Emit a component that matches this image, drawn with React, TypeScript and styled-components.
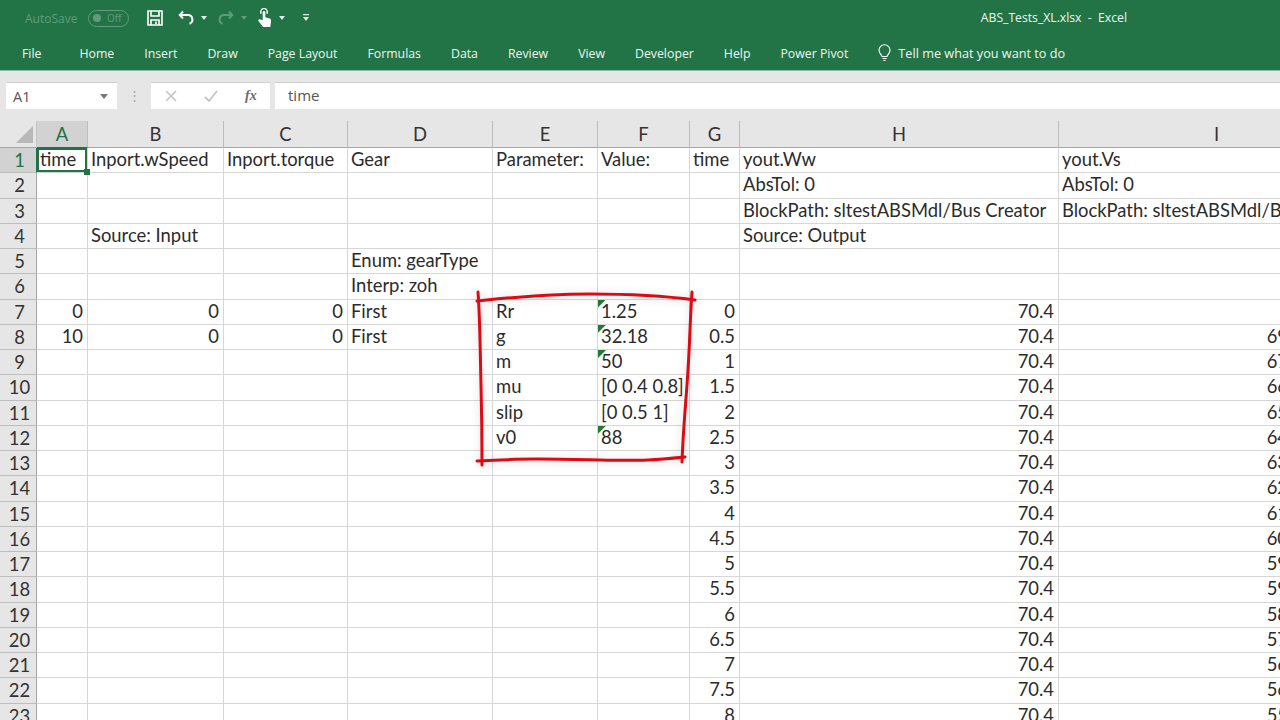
import React from 'react';
import styled, { createGlobalStyle } from 'styled-components';

const GlobalStyle = createGlobalStyle`
  html, body {
    margin: 0;
    padding: 0;
    width: 1280px;
    height: 720px;
    overflow: hidden;
    background: #fff;
  }
  * { box-sizing: border-box; }
`;

const Page = styled.div`
  width: 1280px;
  height: 720px;
  overflow: hidden;
  font-family: 'Open Sans', 'Noto Sans', sans-serif;
`;

const Ribbon = styled.header`
  height: 71px;
  background: #227447;
  border-bottom: 1px solid #8fb8a2;
  color: #fff;
  display: flex;
  flex-direction: column;
`;

const TitleRow = styled.div`
  height: 36px;
  display: flex;
  align-items: center;
  padding-left: 25px;
`;

const AutoSave = styled.span`
  width: 63px;
  font-size: 12px;
  color: #5f9c7b;
`;

const Toggle = styled.span`
  width: 41px;
  height: 17px;
  border: 1px solid #5f9c7b;
  border-radius: 9px;
  display: flex;
  align-items: center;
  gap: 6px;
  padding-left: 4px;
  margin-right: 18px;
  font-size: 10px;
  color: #5f9c7b;
  &::before {
    content: '';
    width: 8px;
    height: 8px;
    border-radius: 50%;
    background: #5f9c7b;
  }
`;

const QatIcon = styled.svg<{ $gap?: number }>`
  display: block;
  flex: none;
  margin-right: ${({ $gap }) => $gap ?? 0}px;
`;

const FileName = styled.span`
  margin-left: auto;
  margin-right: 153px;
  font-size: 12.2px;
  white-space: pre;
  color: #f1f6f3;
  position: relative;
  top: -1px;
`;

const TabRow = styled.nav`
  height: 34px;
  display: flex;
  align-items: center;
  padding-left: 22px;
  gap: 30px;
  font-size: 12.3px;
  color: #eef5f1;
`;

const Tab = styled.span<{ $first?: boolean }>`
  white-space: nowrap;
  margin-right: ${({ $first }) => ($first ? 8 : 0)}px;
`;

const TellMe = styled.span`
  display: flex;
  align-items: center;
  gap: 7px;
  white-space: nowrap;
  font-size: 12.7px;
`;

const FormulaBar = styled.div`
  height: 50px;
  background: #e6e6e6;
  display: flex;
  align-items: flex-start;
  padding: 11px 0 0 6px;
`;

const NameBox = styled.div`
  width: 111px;
  height: 27px;
  background: #fff;
  border-top: 1px solid #cfcfcf;
  display: flex;
  align-items: center;
  justify-content: space-between;
  padding: 0 9px 0 7px;
  font-size: 14.5px;
  color: #555;
`;

const Caret = styled.span`
  width: 0;
  height: 0;
  border-left: 4px solid transparent;
  border-right: 4px solid transparent;
  border-top: 5px solid #777;
`;

const Grip = styled.span`
  width: 34px;
  text-align: center;
  color: #a9a9a9;
  font-size: 13px;
  line-height: 27px;
`;

const FormulaButtons = styled.div`
  width: 119px;
  height: 27px;
  background: #fff;
  border-top: 1px solid #cfcfcf;
  display: flex;
  align-items: center;
  padding-left: 14px;
  gap: 27px;
  margin-right: 5px;
`;

const FxLabel = styled.span`
  font-family: 'Liberation Serif', serif;
  font-style: italic;
  font-weight: 700;
  font-size: 14px;
  color: #6b6b6b;
`;

const FormulaInput = styled.div`
  flex: 1;
  height: 27px;
  background: #fff;
  border-top: 1px solid #cfcfcf;
  padding-left: 13px;
  font-size: 15px;
  line-height: 25px;
  color: #555;
`;

const Sheet = styled.div`
  position: relative;
  display: grid;
  grid-template-columns: 37px 51px 136px 124px 145px 105px 92px 50px 319px 316px;
  grid-template-rows: 27px;
  grid-auto-rows: 25.25px;
  width: 1375px;
  font-family: Lato, Carlito, sans-serif;
  font-size: 18.4px;
  color: #2b2b2b;
`;

const Corner = styled.div`
  background: #e6e6e6;
  border-bottom: 1px solid #a6a6a6;
  border-right: 1px solid #c4c4c4;
  &::before {
    content: '';
    display: block;
    width: 17px;
    height: 17px;
    margin: 5px 0 0 16px;
    background: #b8b8b8;
    clip-path: polygon(100% 0, 100% 100%, 0 100%);
  }
`;

const ColHead = styled.div<{ $active?: boolean }>`
  background: ${({ $active }) => ($active ? '#d2d2d2' : '#e6e6e6')};
  color: ${({ $active }) => ($active ? '#217346' : '#333')};
  border-bottom: 1px solid ${({ $active }) => ($active ? '#217346' : '#a6a6a6')};
  border-right: 1px solid #bdbdbd;
  text-align: center;
  line-height: 27px;
`;

const RowHead = styled.div<{ $active?: boolean }>`
  background: ${({ $active }) => ($active ? '#d2d2d2' : '#e6e6e6')};
  color: ${({ $active }) => ($active ? '#217346' : '#333')};
  border-bottom: 1px solid #bdbdbd;
  border-right: 1px solid ${({ $active }) => ($active ? '#217346' : '#a6a6a6')};
  text-align: center;
  line-height: 24px;
  padding-left: 3px;
`;

const Cell = styled.div<{ $right?: boolean; $flag?: boolean; $selected?: boolean; $tail?: boolean }>`
  position: relative;
  border-bottom: 1px solid #d6d6d6;
  border-right: 1px solid #d6d6d6;
  padding: 0 ${({ $tail }) => ($tail ? 7 : 4)}px 0 3px;
  line-height: 23.5px;
  white-space: nowrap;
  overflow: ${({ $selected }) => ($selected ? 'visible' : 'hidden')};
  text-align: ${({ $right }) => ($right ? 'right' : 'left')};

  ${({ $flag }) =>
    $flag &&
    `&::before {
      content: '';
      position: absolute;
      left: 0;
      top: 0;
      width: 8px;
      height: 8px;
      background: #1e7d32;
      clip-path: polygon(0 0, 100% 0, 0 100%);
    }`}

  ${({ $selected }) =>
    $selected &&
    `box-shadow: inset 0 0 0 2px #217346;
    &::after {
      content: '';
      position: absolute;
      right: -3px;
      bottom: -3px;
      width: 6px;
      height: 6px;
      background: #217346;
      z-index: 2;
    }`}
`;

const Markup = styled.svg`
  position: absolute;
  left: 465px;
  top: 164px;
  width: 240px;
  height: 190px;
  pointer-events: none;
  filter: drop-shadow(0 1px 4px rgba(0, 0, 0, 0.16));
`;

const columns = ['A', 'B', 'C', 'D', 'E', 'F', 'G', 'H', 'I'];
const numericCols = new Set(['A', 'B', 'C', 'G', 'H', 'I']);

const iValues: Record<number, string> = {
  7: '70.4',
  8: '69.1234567',
  9: '67.9234567',
  10: '66.7234567',
  11: '65.5234567',
  12: '64.3234567',
  13: '63.2234567',
  14: '62.1234567',
  15: '61.0234567',
  16: '60.0234567',
  17: '59.4234567',
  18: '59.0234567',
  19: '58.1234567',
  20: '57.3234567',
  21: '56.8234567',
  22: '56.1234567',
  23: '55.3234567',
};

const textRows: Record<number, Record<string, string>> = {
  1: {
    A: 'time',
    B: 'Inport.wSpeed',
    C: 'Inport.torque',
    D: 'Gear',
    E: 'Parameter:',
    F: 'Value:',
    G: 'time',
    H: 'yout.Ww',
    I: 'yout.Vs',
  },
  2: { H: 'AbsTol: 0', I: 'AbsTol: 0' },
  3: {
    H: 'BlockPath: sltestABSMdl/Bus Creator',
    I: 'BlockPath: sltestABSMdl/Bus Creator',
  },
  4: { B: 'Source: Input', H: 'Source: Output' },
  5: { D: 'Enum: gearType' },
  6: { D: 'Interp: zoh' },
  7: { A: '0', B: '0', C: '0', D: 'First', E: 'Rr', F: '1.25' },
  8: { A: '10', B: '0', C: '0', D: 'First', E: 'g', F: '32.18' },
  9: { E: 'm', F: '50' },
  10: { E: 'mu', F: '[0 0.4 0.8]' },
  11: { E: 'slip', F: '[0 0.5 1]' },
  12: { E: 'v0', F: '88' },
};

const flagged = new Set([7, 8, 9, 12]);

const cellValue = (row: number, col: string): string => {
  if (row >= 7 && col === 'G') return String((row - 7) / 2);
  if (row >= 7 && col === 'H') return '70.4';
  if (row >= 7 && col === 'I') return iValues[row];
  return textRows[row]?.[col] ?? '';
};

const tabs = [
  'File',
  'Home',
  'Insert',
  'Draw',
  'Page Layout',
  'Formulas',
  'Data',
  'Review',
  'View',
  'Developer',
  'Help',
  'Power Pivot',
];

const rows = Array.from({ length: 23 }, (_, i) => i + 1);

const App: React.FC = () => (
  <Page>
    <GlobalStyle />
    <Ribbon>
      <TitleRow>
        <AutoSave>AutoSave</AutoSave>
        <Toggle>Off</Toggle>
        <QatIcon $gap={15} width="16" height="16" viewBox="0 0 16 16" fill="none" stroke="#fff" strokeWidth="1.6">
          <path d="M1 1h14v14H1z" />
          <path d="M4 1v5h8V1M4 15v-5h8v5" />
          <path d="M9 11.500v2.500" />
        </QatIcon>
        <QatIcon $gap={6} width="17" height="16" viewBox="0 0 17 16" fill="none" stroke="#fff" strokeWidth="2">
          <path d="M5 1.500 1.800 5 5 8.500" />
          <path d="M2 5h8a4.500 4.500 0 0 1 1.500 8.700" />
        </QatIcon>
        <QatIcon $gap={10} width="6" height="4" viewBox="0 0 6 4" fill="#dfeee6">
          <path d="M0 0h6L3 4z" />
        </QatIcon>
        <QatIcon $gap={7} width="17" height="16" viewBox="0 0 17 16" fill="none" stroke="#5f9c7b" strokeWidth="2">
          <path d="M12 1.500 15.200 5 12 8.500" />
          <path d="M15 5H7a4.500 4.500 0 0 0-1.500 8.700" />
        </QatIcon>
        <QatIcon $gap={9} width="6" height="4" viewBox="0 0 6 4" fill="#5f9c7b">
          <path d="M0 0h6L3 4z" />
        </QatIcon>
        <QatIcon $gap={7} width="16" height="20" viewBox="0 0 16 20" fill="#fff">
          <path d="M5 1.500a3.500 3.500 0 0 1 6 0 4 4 0 0 1 .5 4.500l-1.500-.8a2.500 2.500 0 1 0-4 0l-1.500.8A4 4 0 0 1 5 1.500z" />
          <path d="M6.700 4.200a1.300 1.300 0 0 1 2.600 0v5l4.200 1.200c1.200.4 1.800 1.200 1.600 2.400l-.8 6.200H7.200L2.600 13.300c-.8-1-.1-2.200 1.100-2l3 1z" />
        </QatIcon>
        <QatIcon $gap={18} width="6" height="4" viewBox="0 0 6 4" fill="#dfeee6">
          <path d="M0 0h6L3 4z" />
        </QatIcon>
        <QatIcon width="6" height="8" viewBox="0 0 6 8" fill="#dfeee6">
          <path d="M0 0h6v1.200H0zM0 3h6L3 7z" />
        </QatIcon>
        <FileName>{'ABS_Tests_XL.xlsx  -  Excel'}</FileName>
      </TitleRow>
      <TabRow>
        {tabs.map((tab) => (
          <Tab key={tab} $first={tab === 'File'}>
            {tab}
          </Tab>
        ))}
        <TellMe>
          <svg width="13" height="18" viewBox="0 0 13 18" fill="none" stroke="#fff" strokeWidth="1.1">
            <path d="M4 12.500C3.600 10.500 1 9.500 1 6.300a5.500 5.500 0 0 1 11 0c0 3.200-2.600 4.200-3 6.200z" />
            <path d="M4.500 14.500h4M5.300 16.500h2.400" />
          </svg>
          Tell me what you want to do
        </TellMe>
      </TabRow>
    </Ribbon>
    <FormulaBar>
      <NameBox>
        A1
        <Caret />
      </NameBox>
      <Grip>⋮</Grip>
      <FormulaButtons>
        <svg width="12" height="12" viewBox="0 0 12 12" stroke="#c4c4c4" strokeWidth="1.6">
          <path d="M1 1l10 10M11 1 1 11" />
        </svg>
        <svg width="14" height="12" viewBox="0 0 14 12" fill="none" stroke="#c4c4c4" strokeWidth="1.8">
          <path d="M1 7l4 4 8-10" />
        </svg>
        <FxLabel>fx</FxLabel>
      </FormulaButtons>
      <FormulaInput>time</FormulaInput>
    </FormulaBar>
    <Sheet>
      <Corner />
      {columns.map((col) => (
        <ColHead key={col} $active={col === 'A'}>
          {col}
        </ColHead>
      ))}
      {rows.map((row) => (
        <React.Fragment key={row}>
          <RowHead $active={row === 1}>{row}</RowHead>
          {columns.map((col) => {
            const value = cellValue(row, col);
            const isNumber = numericCols.has(col) && value !== '' && !Number.isNaN(Number(value));
            return (
              <Cell
                key={col}
                $right={isNumber}
                $tail={col === 'I'}
                $flag={col === 'F' && flagged.has(row)}
                $selected={row === 1 && col === 'A'}
              >
                {value}
              </Cell>
            );
          })}
        </React.Fragment>
      ))}
      <Markup viewBox="0 0 240 190" fill="none" stroke="#dc0a14" strokeWidth="3" strokeLinecap="round">
        <path d="M12 16C60 11 90 9 125 9S200 11 230 15" />
        <path d="M13 7C15 33 15 60 16 100S17 160 17 180" />
        <path d="M12 176C60 173 90 174 135 175S190 175 220 172" />
        <path d="M227 7C225 33 225 60 222 100S218 150 217 177" />
      </Markup>
    </Sheet>
  </Page>
);

export default App;
